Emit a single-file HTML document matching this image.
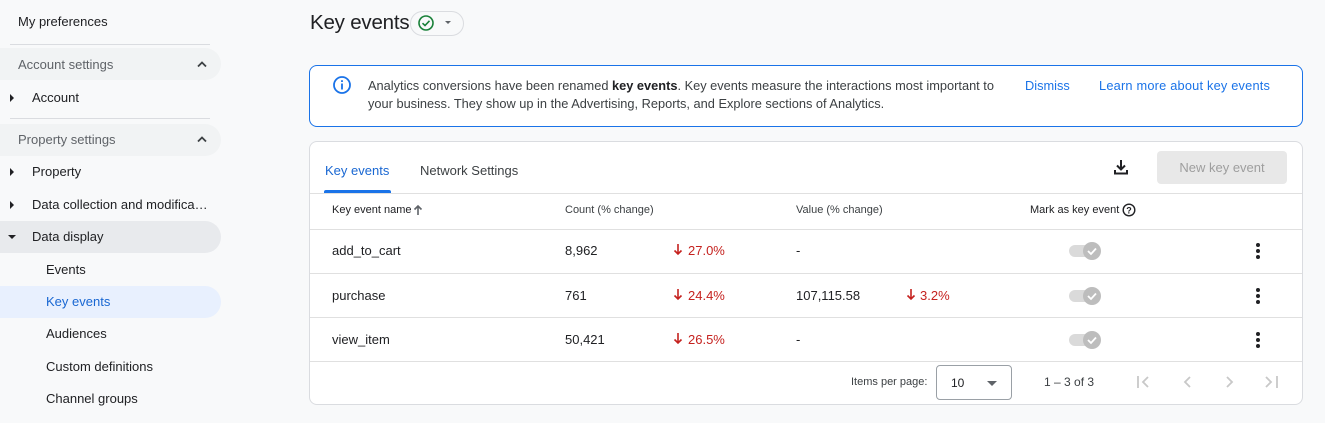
<!DOCTYPE html>
<html><head><meta charset="utf-8"><style>
*{box-sizing:border-box;margin:0;padding:0}
body{width:1325px;height:423px;background:#f8f9fa;font-family:"Liberation Sans",Arial,sans-serif;color:#202124;position:relative;overflow:hidden;font-size:13px}
.a{position:absolute;white-space:nowrap}
.pill{position:absolute;left:0;width:221px;border-radius:0 16px 16px 0}
.div{position:absolute;left:10px;width:200px;height:1px;background:#dadce0}
.sec{color:#5f6368;font-size:13px}
.tri{position:absolute;left:10px;width:0;height:0;border-top:4px solid transparent;border-bottom:4px solid transparent;border-left:4px solid #202124}
.trid{position:absolute;left:8px;width:0;height:0;border-left:4px solid transparent;border-right:4px solid transparent;border-top:4px solid #202124}
.hl{position:absolute;left:310px;width:992px;height:1px;background:#e0e0e0}
.red{color:#c5221f}
.tog{position:absolute;left:1069px;width:34px;height:20px}
.dots{position:absolute;left:1256px;width:4px}
.dots i{display:block;width:4px;height:4px;border-radius:2px;background:#202124;margin-bottom:2px}
</style></head><body>
<div class="a" style="left:18px;top:14px">My preferences</div>
<div class="div" style="top:44px"></div>
<div class="pill" style="top:48px;height:32px;background:#f1f3f4"></div>
<div class="a sec" style="left:18px;top:57px">Account settings</div>
<svg class="a" style="left:196px;top:60px" width="12" height="8"><path d="M2 6.5 L6 2.5 L10 6.5" stroke="#3c4043" stroke-width="1.8" fill="none"/></svg>
<div class="tri" style="top:94px"></div>
<div class="a" style="left:32px;top:90px">Account</div>
<div class="div" style="top:118px"></div>
<div class="pill" style="top:124px;height:32px;background:#f1f3f4"></div>
<div class="a sec" style="left:18px;top:132px">Property settings</div>
<svg class="a" style="left:196px;top:135px" width="12" height="8"><path d="M2 6.5 L6 2.5 L10 6.5" stroke="#3c4043" stroke-width="1.8" fill="none"/></svg>
<div class="tri" style="top:168px"></div>
<div class="a" style="left:32px;top:164px">Property</div>
<div class="tri" style="top:201px"></div>
<div class="a" style="left:32px;top:197px">Data collection and modifica…</div>
<div class="pill" style="top:221px;height:32px;background:#e8eaed"></div>
<div class="trid" style="top:235px"></div>
<div class="a" style="left:32px;top:229px">Data display</div>
<div class="a" style="left:46px;top:262px">Events</div>
<div class="pill" style="top:286px;height:32px;background:#e8f0fe"></div>
<div class="a" style="left:46px;top:294px;color:#1967d2">Key events</div>
<div class="a" style="left:46px;top:326px">Audiences</div>
<div class="a" style="left:46px;top:359px">Custom definitions</div>
<div class="a" style="left:46px;top:391px">Channel groups</div>

<div class="a" style="left:310px;top:11px;font-size:20.5px;letter-spacing:-0.2px">Key events</div>
<div class="a" style="left:410px;top:11px;width:54px;height:25px;border:1px solid #dadce0;border-radius:13px;background:#f8f9fa"></div>
<svg class="a" style="left:417px;top:14px" width="18" height="18"><circle cx="9" cy="9" r="7" stroke="#188038" stroke-width="1.6" fill="none"/><path d="M5.5 9.2 L8 11.5 L12.5 6.8" stroke="#188038" stroke-width="1.6" fill="none"/></svg>
<div class="a" style="left:445px;top:21px;border-left:3.5px solid transparent;border-right:3.5px solid transparent;border-top:3.5px solid #5f6368"></div>

<div class="a" style="left:309px;top:65px;width:994px;height:62px;border:1px solid #1a73e8;border-radius:8px;background:#fff"></div>
<svg class="a" style="left:332px;top:75px" width="20" height="20"><circle cx="10" cy="10" r="8" stroke="#1a73e8" stroke-width="1.8" fill="none"/><rect x="9.1" y="8.5" width="1.8" height="6" fill="#1a73e8"/><rect x="9.1" y="5.2" width="1.8" height="1.8" fill="#1a73e8"/></svg>
<div class="a" style="left:368px;top:77px;font-size:12.8px;line-height:17.5px;color:#3c4043">Analytics conversions have been renamed <b style="color:#202124">key events</b>. Key events measure the interactions most important to<br>your business. They show up in the Advertising, Reports, and Explore sections of Analytics.</div>
<div class="a" style="left:1025px;top:78px;color:#1a73e8;font-size:12.8px">Dismiss</div>
<div class="a" style="left:1099px;top:78px;color:#1a73e8;font-size:12.8px;letter-spacing:0.2px">Learn more about key events</div>

<div class="a" style="left:309px;top:141px;width:994px;height:264px;border:1px solid #dadce0;border-radius:8px;background:#fff"></div>
<div class="a" style="left:325px;top:163px;color:#1967d2">Key events</div>
<div class="a" style="left:324px;top:190px;width:67px;height:3px;background:#1a73e8;border-radius:2px 2px 0 0"></div>
<div class="a" style="left:420px;top:163px;color:#3c4043">Network Settings</div>
<svg class="a" style="left:1112px;top:158px" width="18" height="18"><path d="M9 2 V11 M5 7.5 L9 11.5 L13 7.5" stroke="#202124" stroke-width="2" fill="none"/><path d="M3 12 V15.5 H15 V12" stroke="#202124" stroke-width="2" fill="none"/></svg>
<div class="a" style="left:1157px;top:151px;width:130px;height:33px;background:#e8e8e8;border-radius:4px;color:#9e9e9e;text-align:center;line-height:33px">New key event</div>
<div class="hl" style="top:193px"></div>
<div class="a" style="left:332px;top:204px;font-size:11px">Key event name</div>
<svg class="a" style="left:413px;top:204px" width="10" height="12"><path d="M5 11 V2 M1.5 5.5 L5 2 L8.5 5.5" stroke="#5f6368" stroke-width="1.6" fill="none"/></svg>
<div class="a" style="left:565px;top:204px;font-size:11px;color:#3c4043">Count (% change)</div>
<div class="a" style="left:796px;top:204px;font-size:11px;color:#3c4043">Value (% change)</div>
<div class="a" style="left:1030px;top:204px;font-size:11px">Mark as key event</div>
<svg class="a" style="left:1122px;top:203px" width="14" height="14"><circle cx="7" cy="7" r="5.8" stroke="#202124" stroke-width="1.4" fill="none"/><text x="7" y="10.3" font-size="9" font-family="Liberation Sans" text-anchor="middle" fill="#202124" font-weight="bold">?</text></svg>
<div class="hl" style="top:229px"></div>
<div class="hl" style="top:273px"></div>
<div class="hl" style="top:317px"></div>
<div class="hl" style="top:361px"></div>

<div class="a" style="left:332px;top:243px">add_to_cart</div>
<div class="a" style="left:565px;top:243px">8,962</div>
<div class="a red" style="left:688px;top:243px">27.0%</div>
<div class="a" style="left:796px;top:243px">-</div>

<div class="a" style="left:332px;top:288px">purchase</div>
<div class="a" style="left:565px;top:288px">761</div>
<div class="a red" style="left:688px;top:288px">24.4%</div>
<div class="a" style="left:796px;top:288px">107,115.58</div>
<div class="a red" style="left:920px;top:288px">3.2%</div>

<div class="a" style="left:332px;top:332px">view_item</div>
<div class="a" style="left:565px;top:332px">50,421</div>
<div class="a red" style="left:688px;top:332px">26.5%</div>
<div class="a" style="left:796px;top:332px">-</div>

<svg class="a" style="left:673px;top:243px" width="10" height="13"><path d="M5 1 V11 M1.5 7.5 L5 11 L8.5 7.5" stroke="#c5221f" stroke-width="1.6" fill="none"/></svg>
<svg class="a" style="left:673px;top:288px" width="10" height="13"><path d="M5 1 V11 M1.5 7.5 L5 11 L8.5 7.5" stroke="#c5221f" stroke-width="1.6" fill="none"/></svg>
<svg class="a" style="left:906px;top:288px" width="10" height="13"><path d="M5 1 V11 M1.5 7.5 L5 11 L8.5 7.5" stroke="#c5221f" stroke-width="1.6" fill="none"/></svg>
<svg class="a" style="left:673px;top:332px" width="10" height="13"><path d="M5 1 V11 M1.5 7.5 L5 11 L8.5 7.5" stroke="#c5221f" stroke-width="1.6" fill="none"/></svg>

<svg class="tog" style="top:241px" viewBox="0 0 34 20"><rect x="0" y="4" width="28" height="12" rx="6" fill="#dadada"/><circle cx="23" cy="10" r="9" fill="#bdbdbd"/><path d="M19 10 L22 13 L27 7.5" stroke="#fff" stroke-width="1.8" fill="none"/></svg>
<svg class="tog" style="top:286px" viewBox="0 0 34 20"><rect x="0" y="4" width="28" height="12" rx="6" fill="#dadada"/><circle cx="23" cy="10" r="9" fill="#bdbdbd"/><path d="M19 10 L22 13 L27 7.5" stroke="#fff" stroke-width="1.8" fill="none"/></svg>
<svg class="tog" style="top:330px" viewBox="0 0 34 20"><rect x="0" y="4" width="28" height="12" rx="6" fill="#dadada"/><circle cx="23" cy="10" r="9" fill="#bdbdbd"/><path d="M19 10 L22 13 L27 7.5" stroke="#fff" stroke-width="1.8" fill="none"/></svg>
<div class="dots" style="top:243px"><i></i><i></i><i></i></div>
<div class="dots" style="top:288px"><i></i><i></i><i></i></div>
<div class="dots" style="top:332px"><i></i><i></i><i></i></div>

<div class="a" style="left:851px;top:376px;font-size:11px;color:#3c4043">Items per page:</div>
<div class="a" style="left:936px;top:365px;width:76px;height:35px;border:1px solid #9aa0a6;border-radius:4px"></div>
<div class="a" style="left:951px;top:376px;font-size:12px">10</div>
<div class="a" style="left:987px;top:381px;border-left:5px solid transparent;border-right:5px solid transparent;border-top:5px solid #5f6368"></div>
<div class="a" style="left:1044px;top:375px;font-size:12px;color:#3c4043">1 – 3 of 3</div>
<svg class="a" style="left:1134px;top:374px" width="150" height="16" fill="none" stroke="#c8c8c8" stroke-width="1.8"><path d="M4 2 V14 M14 3 L9 8 L14 13"/><path d="M56 3 L51 8 L56 13"/><path d="M93 3 L98 8 L93 13"/><path d="M132 3 L137 8 L132 13 M143 2 V14"/></svg>
</body></html>
